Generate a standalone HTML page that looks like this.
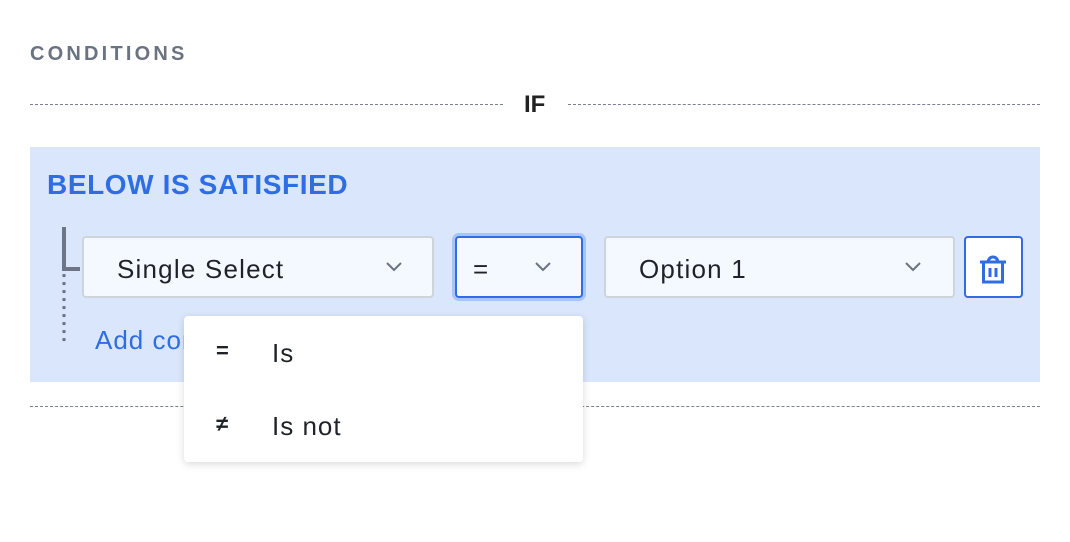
<!DOCTYPE html>
<html><head><style>
*{box-sizing:border-box;margin:0;padding:0}
body{width:1070px;height:542px;background:#fff;font-family:"Liberation Sans",sans-serif;position:relative;overflow:hidden;color:#1f2328}
.abs{position:absolute}
.dash{position:absolute;height:0;border-top:2px dashed #7a8090}
.sel{position:absolute;top:236px;height:62px;background:#f4f8ff;border:2px solid #cfd3da;border-radius:4px;font-size:26px;letter-spacing:1.2px;line-height:62px}
.chev{position:absolute;top:24px;width:16px;height:10px}
</style></head><body>
<div class="abs" style="left:30px;top:43px;font-size:20px;font-weight:bold;letter-spacing:3.2px;color:#6b7280">CONDITIONS</div>
<div class="dash" style="left:30px;width:473px;top:104px;border-top-width:1.5px"></div>
<div class="abs" style="left:524px;top:91px;font-size:24px;font-weight:bold;color:#222">IF</div>
<div class="dash" style="left:568px;width:472px;top:104px;border-top-width:1.5px"></div>
<div class="abs" style="left:30px;top:147px;width:1010px;height:235px;background:#dae6fc"></div>
<div class="abs" style="left:47px;top:169px;font-size:28px;font-weight:bold;color:#2f6de5;letter-spacing:0.6px">BELOW IS SATISFIED</div>
<div class="abs" style="left:62px;top:227px;width:4px;height:44px;background:#6e7587"></div>
<div class="abs" style="left:62px;top:267px;width:18px;height:4px;background:#6e7587"></div>
<div class="abs" style="left:62px;top:274px;width:4px;height:72px;background:radial-gradient(circle at 2px 1.5px,#6e7587 1.5px,transparent 2px) 0 0/4px 8px repeat-y"></div>
<div class="sel" style="left:82px;width:352px;padding-left:33px">Single Select
<svg class="chev" style="left:302px" viewBox="0 0 16 10"><path d="M1 1l7 7 7-7" fill="none" stroke="#6b7280" stroke-width="2"/></svg></div>
<div class="sel" style="left:455px;width:128px;padding-left:16px;border-color:#2f6de5;box-shadow:0 0 0 3px #a9c4f7">=
<svg class="chev" style="left:78px" viewBox="0 0 16 10"><path d="M1 1l7 7 7-7" fill="none" stroke="#6b7280" stroke-width="2"/></svg></div>
<div class="sel" style="left:604px;width:351px;padding-left:33px">Option 1
<svg class="chev" style="left:299px" viewBox="0 0 16 10"><path d="M1 1l7 7 7-7" fill="none" stroke="#6b7280" stroke-width="2"/></svg></div>
<div class="abs" style="left:964px;top:236px;width:59px;height:62px;background:#fff;border:2px solid #2f6de5;border-radius:4px">
<svg class="abs" style="left:13px;top:17px" width="30" height="30" viewBox="0 0 30 30"><path d="M1 7H27M9 7Q10 2 14 2Q18 2 19 7" fill="none" stroke="#2f6de5" stroke-width="3"/><path d="M4.5 8V27H23.5V8" fill="none" stroke="#2f6de5" stroke-width="3"/><path d="M11 13V22M17 13V22" stroke="#2f6de5" stroke-width="3"/></svg></div>
<div class="abs" style="left:95px;top:325px;font-size:26px;letter-spacing:1px;color:#2f6de5">Add condition</div>
<div class="dash" style="left:30px;width:1010px;top:406px;border-top-width:1.5px"></div>
<div class="abs" style="left:184px;top:316px;width:399px;height:146px;background:#fff;border-radius:4px;box-shadow:0 2px 8px rgba(0,0,0,0.15)">
<div class="abs" style="left:32px;top:22px;font-size:22px;font-weight:bold">=</div>
<div class="abs" style="left:88px;top:22px;font-size:26px;letter-spacing:1px">Is</div>
<div class="abs" style="left:32px;top:95px;font-size:22px;font-weight:bold">≠</div>
<div class="abs" style="left:88px;top:95px;font-size:26px;letter-spacing:1px">Is not</div>
</div>
</body></html>
